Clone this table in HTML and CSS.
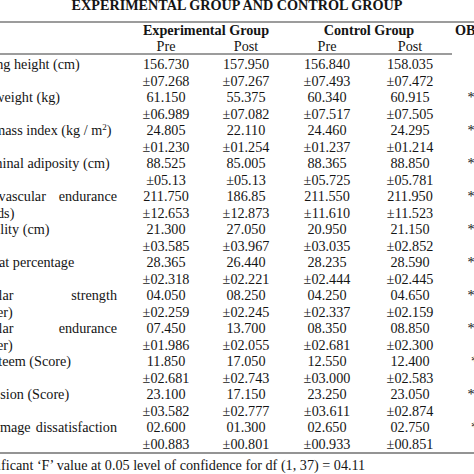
FILE: index.html
```html
<!DOCTYPE html>
<html lang="en">
<head>
<meta charset="utf-8">
<title>Experimental Group and Control Group</title>
<link rel="stylesheet" href="styles.css">
</head>
<body>
<div class="title">EXPERIMENTAL GROUP AND CONTROL GROUP</div>
<table class="stats">
  <colgroup>
    <col class="c-label"><col class="c-ep"><col class="c-ep"><col class="c-cp"><col class="c-cq"><col class="c-f">
  </colgroup>
  <thead>
    <tr class="grp">
      <th rowspan="2" class="h-label"></th>
      <th colspan="2">Experimental Group</th>
      <th colspan="2">Control Group</th>
      <th rowspan="2" class="h-f">OBTAINED ‘F’ RATIO</th>
    </tr>
    <tr class="sub">
      <th>Pre</th><th>Post</th><th>Pre</th><th>Post</th>
    </tr>
  </thead>
  <tbody>
    <tr class="first">
      <td class="label">Standing height (cm)</td>
      <td class="num">156.730<br>±07.268</td>
      <td class="num">157.950<br>±07.267</td>
      <td class="num">156.840<br>±07.493</td>
      <td class="num">158.035<br>±07.472</td>
      <td class="f">0.27</td>
    </tr>
    <tr>
      <td class="label">Body weight (kg)</td>
      <td class="num">61.150<br>±06.989</td>
      <td class="num">55.375<br>±07.082</td>
      <td class="num">60.340<br>±07.517</td>
      <td class="num">60.915<br>±07.505</td>
      <td class="f">*20.45</td>
    </tr>
    <tr>
      <td class="label">Body mass index (kg / m<span class="sup">2</span>)</td>
      <td class="num">24.805<br>±01.230</td>
      <td class="num">22.110<br>±01.254</td>
      <td class="num">24.460<br>±01.237</td>
      <td class="num">24.295<br>±01.214</td>
      <td class="f">*17.86</td>
    </tr>
    <tr>
      <td class="label">Abdominal adiposity (cm)</td>
      <td class="num">88.525<br>±05.13</td>
      <td class="num">85.005<br>±05.13</td>
      <td class="num">88.365<br>±05.725</td>
      <td class="num">88.850<br>±05.781</td>
      <td class="f">*23.09</td>
    </tr>
    <tr>
      <td class="label">Cardiovascular endurance (seconds)</td>
      <td class="num">211.750<br>±12.653</td>
      <td class="num">186.85<br>±12.873</td>
      <td class="num">211.550<br>±11.610</td>
      <td class="num">211.950<br>±11.523</td>
      <td class="f">*15.37</td>
    </tr>
    <tr>
      <td class="label">Flexibility (cm)</td>
      <td class="num">21.300<br>±03.585</td>
      <td class="num">27.050<br>±03.967</td>
      <td class="num">20.950<br>±03.035</td>
      <td class="num">21.150<br>±02.852</td>
      <td class="f">*9.765</td>
    </tr>
    <tr>
      <td class="label">Body fat percentage</td>
      <td class="num">28.365<br>±02.318</td>
      <td class="num">26.440<br>±02.221</td>
      <td class="num">28.235<br>±02.444</td>
      <td class="num">28.590<br>±02.445</td>
      <td class="f">*12.56</td>
    </tr>
    <tr>
      <td class="label">Muscular strength (number)</td>
      <td class="num">04.050<br>±02.259</td>
      <td class="num">08.250<br>±02.245</td>
      <td class="num">04.250<br>±02.337</td>
      <td class="num">04.650<br>±02.159</td>
      <td class="f">*8.405</td>
    </tr>
    <tr>
      <td class="label">Muscular endurance (number)</td>
      <td class="num">07.450<br>±01.986</td>
      <td class="num">13.700<br>±02.055</td>
      <td class="num">08.350<br>±02.681</td>
      <td class="num">08.850<br>±02.300</td>
      <td class="f">*14.33</td>
    </tr>
    <tr>
      <td class="label">Self esteem (Score)</td>
      <td class="num">11.850<br>±02.681</td>
      <td class="num">17.050<br>±02.743</td>
      <td class="num">12.550<br>±03.000</td>
      <td class="num">12.400<br>±02.583</td>
      <td class="f">*8.45</td>
    </tr>
    <tr>
      <td class="label">Depression (Score)</td>
      <td class="num">23.100<br>±03.582</td>
      <td class="num">17.150<br>±02.777</td>
      <td class="num">23.250<br>±03.611</td>
      <td class="num">23.050<br>±02.874</td>
      <td class="f">*7.605</td>
    </tr>
    <tr>
      <td class="label spread">Body image dissatisfaction</td>
      <td class="num">02.600<br>±00.883</td>
      <td class="num">01.300<br>±00.801</td>
      <td class="num">02.650<br>±00.933</td>
      <td class="num">02.750<br>±00.851</td>
      <td class="f">*6.25</td>
    </tr>
  </tbody>
</table>
<p class="note">*Significant ‘F’ value at 0.05 level of confidence for df (1, 37) = 04.11</p>
</body>
</html>
```

FILE: styles.css
```css
html, body {
  margin: 0;
  padding: 0;
}

body {
  width: 474px;
  height: 474px;
  overflow: hidden;
  background: #ffffff;
  color: #141414;
  font-family: "Liberation Serif", "Times New Roman", serif;
  font-size: 14.2px;
}

.title {
  margin: -3px 0 0;
  line-height: 16px;
  font-weight: bold;
  text-align: center;
  white-space: nowrap;
}

.stats {
  margin: 8px 0 0 -40px;
  width: 562px;
  table-layout: fixed;
  border-collapse: collapse;
  border-top: 2px solid #9c9c9c;
  border-bottom: 2px solid #949494;
}

.c-label { width: 166px; }
.c-ep { width: 80px; }
.c-cp { width: 82px; }
.c-cq { width: 84px; }
.c-f { width: 70px; }

.stats th,
.stats td {
  padding: 0;
}

.stats thead th {
  font-weight: bold;
  line-height: 15px;
  text-align: center;
  white-space: nowrap;
  overflow: hidden;
}

.stats .h-f {
  vertical-align: top;
  text-align: left;
  padding-left: 3px;
}

.stats .sub th {
  font-weight: normal;
  line-height: 13px;
  padding-top: 2px;
  border-bottom: 2px solid #9c9c9c;
}

.stats .h-label {
  border-bottom: 2px solid #9c9c9c;
}

.stats tbody td {
  line-height: 16.5px;
  vertical-align: top;
}

.stats tbody tr.first td {
  padding-top: 1px;
}

.stats .label {
  text-align: justify;
  padding-right: 9px;
}

.stats .label.spread {
  text-align-last: justify;
}

.stats .num {
  text-align: center;
  white-space: nowrap;
}

.stats .f {
  text-align: center;
  white-space: nowrap;
}

.sup {
  font-size: 9px;
  line-height: 0;
  vertical-align: 5px;
}

.note {
  margin: 3px 0 0 -36px;
  line-height: 16px;
  white-space: nowrap;
}
```
